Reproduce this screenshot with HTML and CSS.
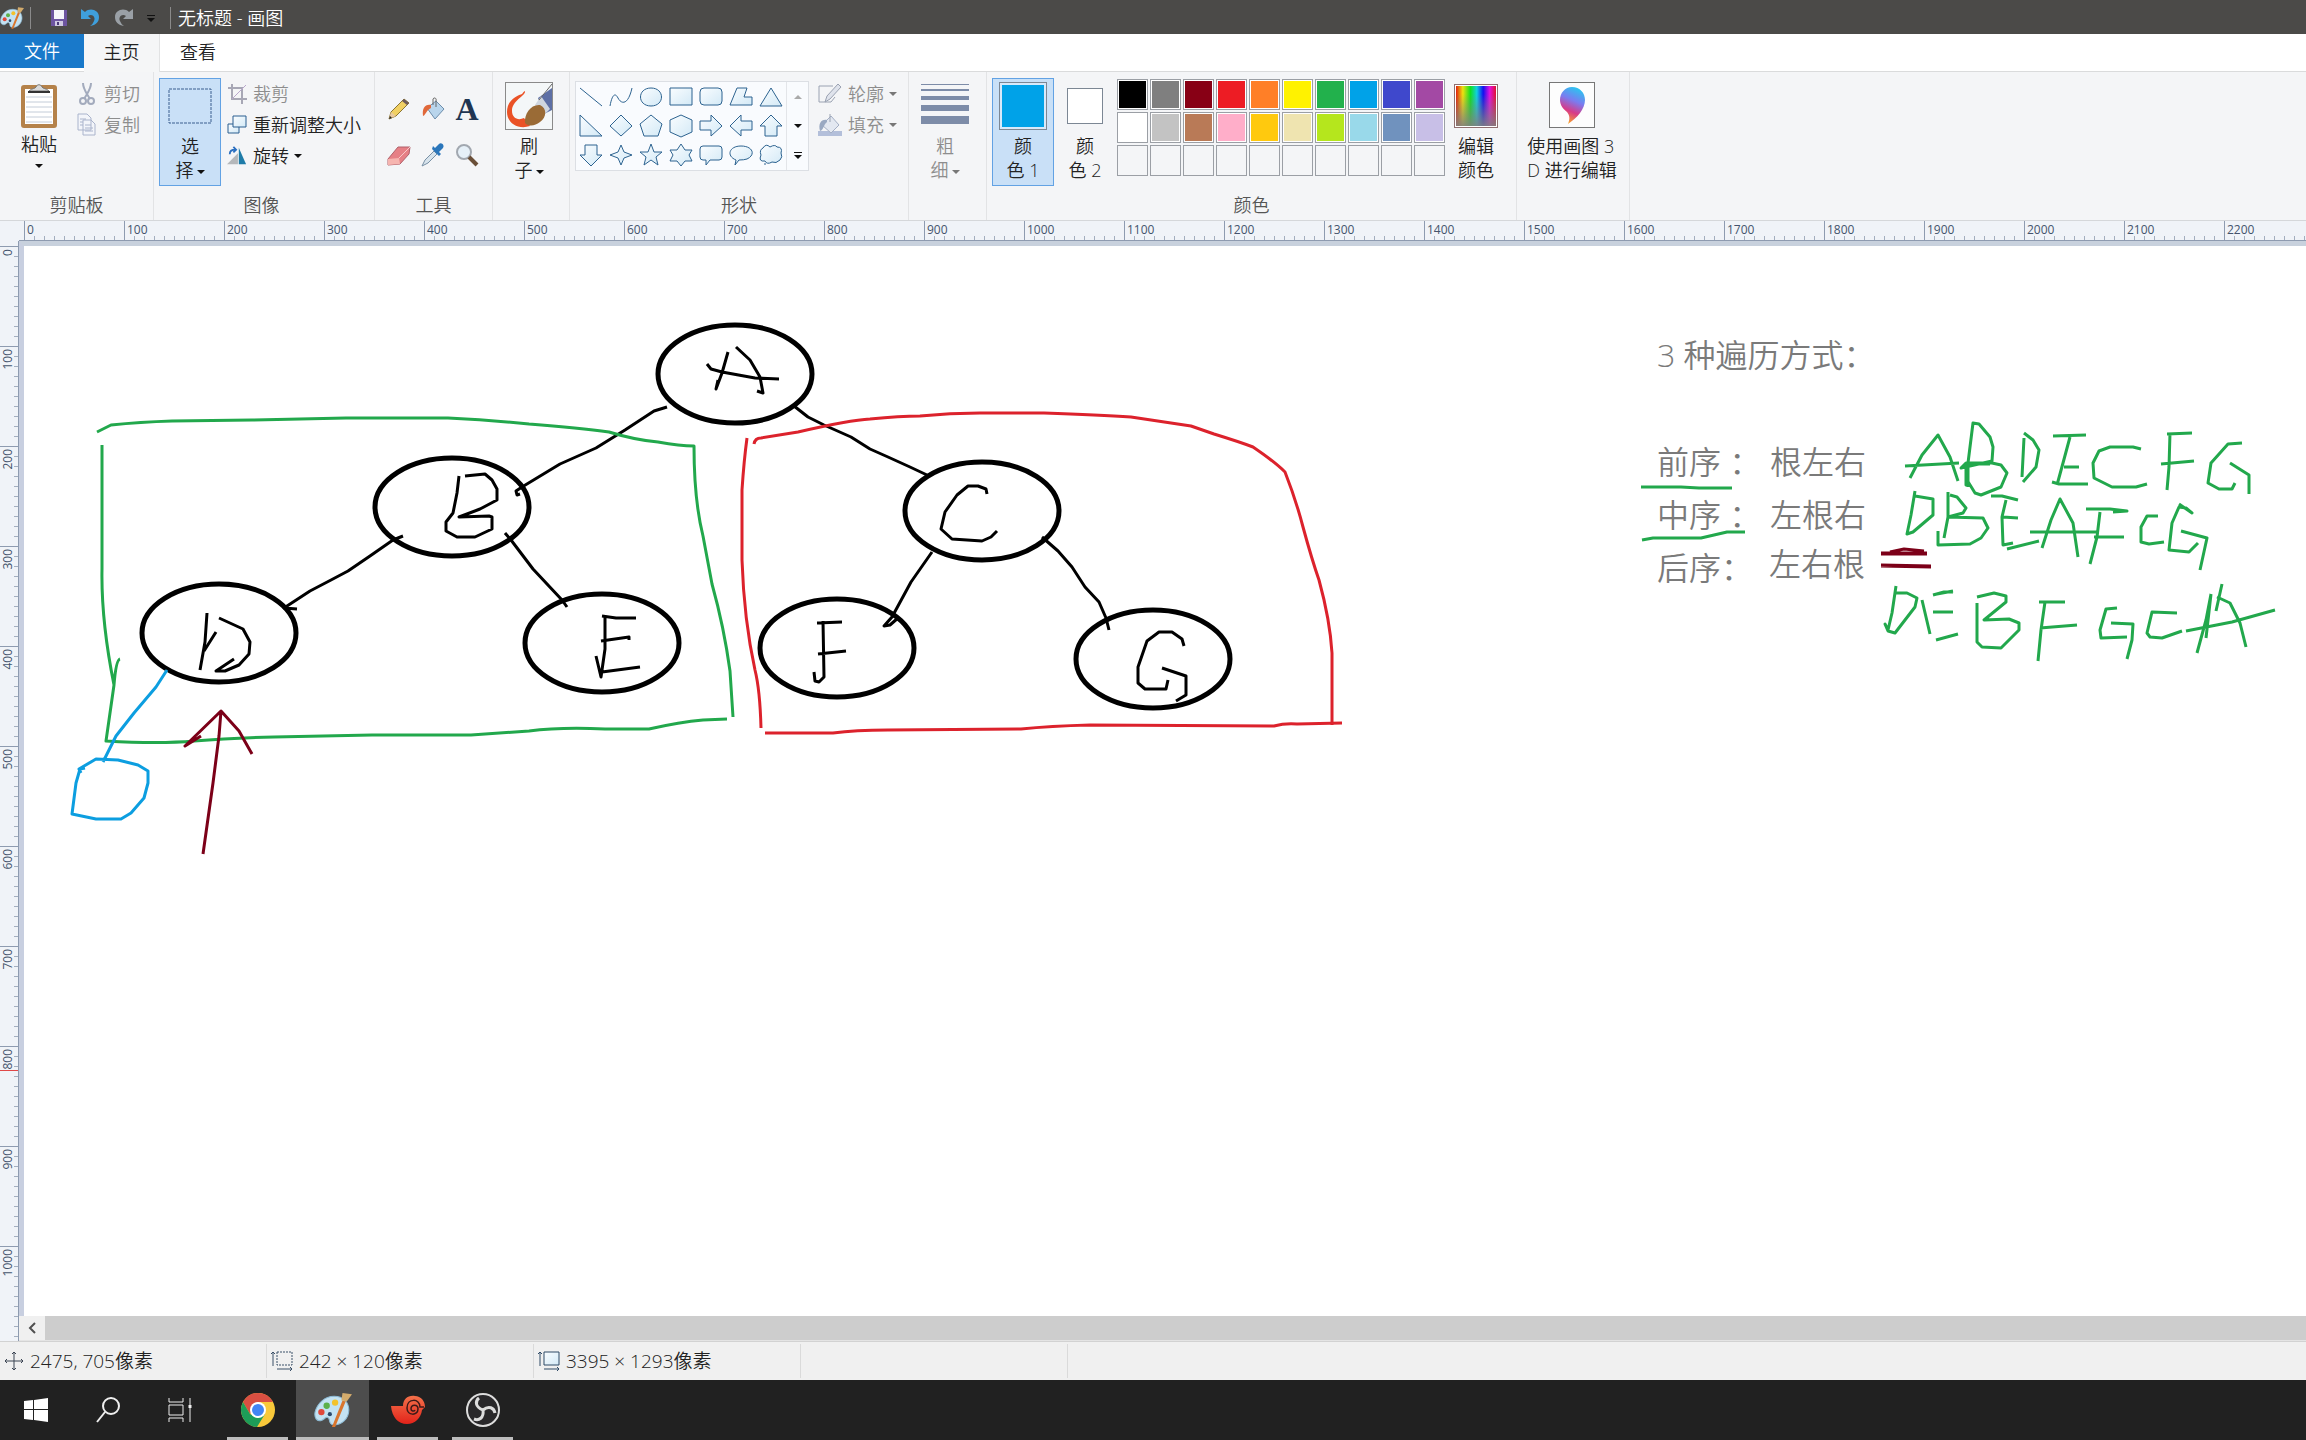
FILE: index.html
```html
<!DOCTYPE html>
<html lang="zh-CN">

<head>
    <meta charset="UTF-8">
    <meta name="viewport" content="width=device-width, initial-scale=1.0">
    <title>无标题 - 画图</title>
    <link rel="stylesheet" href="styles.css">
</head>

<body>
    <svg class="defs" width="0" height="0">
        <defs>
            <linearGradient id="glass" x1="0" y1="0" x2="1" y2="1">
                <stop offset="0" stop-color="#fafdff" />
                <stop offset="1" stop-color="#d3e9f6" />
            </linearGradient>
            <linearGradient id="rainbow">
                <stop offset="0" stop-color="#e02010" />
                <stop offset=".17" stop-color="#f0e010" />
                <stop offset=".36" stop-color="#10e020" />
                <stop offset=".52" stop-color="#10d0e0" />
                <stop offset=".68" stop-color="#1010f0" />
                <stop offset=".84" stop-color="#e010e0" />
                <stop offset="1" stop-color="#e01030" />
            </linearGradient>
            <linearGradient id="fade" x1="0" y1="0" x2="0" y2="1">
                <stop offset=".2" stop-color="#808080" stop-opacity="0" />
                <stop offset="1" stop-color="#808080" stop-opacity=".9" />
            </linearGradient>
            <linearGradient id="drop" x1=".6" y1="0" x2=".3" y2="1">
                <stop offset="0" stop-color="#2cc4f0" />
                <stop offset=".35" stop-color="#7a7cf0" />
                <stop offset=".65" stop-color="#d83a88" />
                <stop offset="1" stop-color="#fbb020" />
            </linearGradient>
            <linearGradient id="shell" x1="0" y1="1" x2="0" y2="0">
                <stop offset="0" stop-color="#e2231a" />
                <stop offset="1" stop-color="#f4714a" />
            </linearGradient>
            <symbol id="palette" viewBox="0 0 36 36">
                <path d="M19 5C10 5 3 12 1 20c-1 6 2 9 6 8 3-1 4-4 6-3 3 1 0 6 5 7 8 1 15-6 15-14 0-7-5-13-14-13z" fill="#c3e2f2" stroke="#8dbad4" />
                <circle cx="7" cy="20" r="3" fill="#e0483a" />
                <circle cx="12" cy="14" r="3" fill="#5cb04a" />
                <circle cx="20" cy="11" r="3" fill="#f3c22b" />
                <circle cx="15" cy="22" r="2" fill="#2b4a6b" />
                <path d="M17 34 27 9l3 1-10 24z" fill="#d9762e" />
                <path d="m26 9 1-7 9 1-5 7z" fill="#d3ab6c" />
            </symbol>
        </defs>
    </svg>

    <header class="titlebar">
        <svg class="app-icon" viewBox="0 0 36 36"><use href="#palette" /></svg>
        <span class="bar-sep"></span>
        <button class="quick" aria-label="保存">
            <svg width="20" height="20" viewBox="0 0 20 20"><path d="M2 2h16v16H2z" fill="#6d55a0" /><path d="M5 2h10v9H5z" fill="#f6f6fb" /><path d="M6 13h8v5H6z" fill="#cfc9e2" /><path d="M8 14h2v3H8z" fill="#4b3a78" /></svg>
        </button>
        <button class="quick" aria-label="撤消">
            <svg width="22" height="22" viewBox="0 0 22 22"><path d="M1 2v10h10L8 9c4-3 8 1 6 5-1 2-2 4-4 5 6-1 9-4 9-9C19 3 10 0 5 5z" fill="#3f9fdc" /></svg>
        </button>
        <button class="quick" aria-label="重做">
            <svg width="22" height="22" viewBox="0 0 22 22"><path d="M21 2v10H11l3-3c-4-3-8 1-6 5 1 2 2 4 4 5-6-1-9-4-9-9C3 3 12 0 17 5z" fill="#9aa0a6" /></svg>
        </button>
        <button class="quick quick-more" aria-label="自定义快速访问工具栏"><i class="line"></i><i class="arrow"></i></button>
        <span class="bar-sep"></span>
        <span class="title">无标题 - 画图</span>
    </header>

    <nav class="tabs">
        <button class="tab file">文件</button>
        <button class="tab active">主页</button>
        <button class="tab">查看</button>
    </nav>

    <section class="ribbon">
        <div class="group clipboard">
            <div class="tools">
                <button class="big paste">
                    <svg width="36" height="44" viewBox="0 0 36 44"><rect x="2" y="3" width="32" height="39" rx="1" fill="#fff" stroke="#b5824a" stroke-width="4" /><path d="M5 13h26M5 18h26M5 23h26M5 28h26M5 33h26M5 38h26" stroke="#c3ccd8" /><path d="M8 7c3-3 6-2 7-4 1-3 5-3 6 0 1 2 4 1 7 4z" fill="#d9d9d9" stroke="#777" /><path d="M7 8h22" stroke="#333" stroke-width="2" /></svg>
                    <span>粘贴</span>
                    <i class="arrow"></i>
                </button>
                <div class="rows">
                    <button class="row off">
                        <svg width="22" height="24" viewBox="0 0 22 24"><path d="M7 1c0 6 3 9 7 16M15 1c0 6-3 9-7 16" fill="none" stroke="#a3abbd" stroke-width="2" /><circle cx="7" cy="19" r="3" fill="none" stroke="#a3abbd" stroke-width="2" /><circle cx="15" cy="19" r="3" fill="none" stroke="#a3abbd" stroke-width="2" /></svg>
                        剪切
                    </button>
                    <button class="row off">
                        <svg width="22" height="24" viewBox="0 0 22 24"><path d="M2 1h9l4 4v12H2zM7 7h8l4 4v11H7z" fill="#f3f5fa" stroke="#aab4cc" /><path d="M4 6h6M4 9h3M4 12h3M9 12h6M9 15h8M9 18h8" stroke="#aab4cc" /></svg>
                        复制
                    </button>
                </div>
            </div>
            <div class="name">剪贴板</div>
        </div>

        <div class="group image">
            <div class="tools">
                <button class="big checked select">
                    <svg width="44" height="36" viewBox="0 0 44 36"><rect x="1" y="1" width="42" height="34" fill="none" stroke="#3a5f8f" stroke-dasharray="3 1" /></svg>
                    <span>选<br>择<i class="arrow"></i></span>
                </button>
                <div class="rows">
                    <button class="row off">
                        <svg width="20" height="22" viewBox="0 0 20 22"><path d="M5 1v15h15M1 5h14v16" fill="none" stroke="#a7a7b5" stroke-width="2" /><path d="M5 16 19 2" stroke="#b9a7cc" /></svg>
                        裁剪
                    </button>
                    <button class="row">
                        <svg width="20" height="20" viewBox="0 0 20 20"><path d="M1 9h11v9H1z" fill="url(#glass)" stroke="#2a5f90" /><path d="M6 1h13v11H6z" fill="url(#glass)" stroke="#2a5f90" /></svg>
                        重新调整大小
                    </button>
                    <button class="row">
                        <svg width="20" height="20" viewBox="0 0 22 20"><path d="M0 19 12 7v12z" fill="#b5b8bb" /><path d="M13 1v18h8z" fill="#1e7ba8" /><path d="M3 8c0-4 3-5 6-5M7 0l3 3-3 3" fill="none" stroke="#2a6fc0" stroke-width="2" /></svg>
                        旋转<i class="arrow"></i>
                    </button>
                </div>
            </div>
            <div class="name">图像</div>
        </div>

        <div class="group kit">
            <div class="tools kit-grid">
                <button aria-label="铅笔"><svg viewBox="0 0 24 24"><path d="m2 22 2-7L17 2l5 4L9 19z" fill="#f1d063" stroke="#8a7432" /><path d="m17 2 5 4-2 2-5-4z" fill="#6d5a5a" /><path d="m2 22 2-7 5 4z" fill="#e9c9a0" /><path d="m2 22 1-3 2 2z" fill="#222" /></svg></button>
                <button aria-label="填充"><svg viewBox="0 0 24 24"><path d="m6 11 9-7 8 8-9 10z" fill="#b9d5ec" stroke="#6c8dab" /><path d="M10 8c-6-1-9 3-8 11 3-1 3-6 8-8z" fill="#e0683a" /><path d="M12 8V2c1-2 4-1 3 2v6" fill="none" stroke="#666" /></svg></button>
                <button class="letter" aria-label="文本">A</button>
                <button aria-label="橡皮擦"><svg viewBox="0 0 24 24"><path d="M1 16 11 4h12l-1 7-9 10-12 1z" fill="#e68086" stroke="#b0606a" /><path d="m1 16 11-1 1 6-12 1z" fill="#f6b5b0" /><path d="m12 15 11-11" stroke="#f8c9c9" /></svg></button>
                <button aria-label="颜色选取器"><svg viewBox="0 0 24 24"><path d="m1 23 3-6 9-9 3 3-9 9z" fill="#d7e3ec" stroke="#7890a5" /><path d="m11 6 7 7 2-2-2-2 4-4c2-3-2-6-4-4l-4 4-2-2z" fill="#2a76bb" /></svg></button>
                <button aria-label="放大镜"><svg viewBox="0 0 24 24"><circle cx="9" cy="9" r="7" fill="#e6f0f8" stroke="#a2a8b0" stroke-width="2" /><path d="m14 14 8 8" stroke="#6a4f38" stroke-width="4" /></svg></button>
            </div>
            <div class="name">工具</div>
        </div>

        <div class="group brush">
            <div class="tools">
                <button class="big">
                    <svg width="48" height="48" viewBox="0 0 48 48"><rect x=".5" y=".5" width="47" height="47" fill="#f4f7f8" stroke="#8a8a8a" /><path d="M20 9c1 5-13 9-13 20 0 7 6 10 12 7l6 8C13 48 2 41 2 30 2 17 14 13 17 12c1-1 1-2 3-3z" fill="#ea5226" /><path d="m33 16 14-10v22l-8 4z" fill="#5d6fa5" /><path d="m30 23 6-9 9 13-6 6z" fill="#cfd6df" /><path d="M20 41c-1-9 6-19 15-18 7 3 7 12 0 17-5 4-11 5-15 1z" fill="#9a6b36" /><path d="M47 2 34 18" stroke="#666" /></svg>
                    <span>刷<br>子<i class="arrow"></i></span>
                </button>
            </div>
            <div class="name"></div>
        </div>

        <div class="group shapes">
            <div class="tools">
                <div class="gallery">
                    <div class="shape-grid" id="shapeGrid"></div>
                    <div class="gallery-scroll">
                        <button class="off" aria-label="上"><i class="arrow up"></i></button>
                        <button aria-label="下"><i class="arrow"></i></button>
                        <button aria-label="更多"><i class="line"></i><i class="arrow"></i></button>
                    </div>
                </div>
                <div class="rows">
                    <button class="row off">
                        <svg width="24" height="22" viewBox="0 0 24 22"><path d="M15 3H1v16h12l4-5" fill="none" stroke="#9aa2b2" /><path d="m7 19 2-6L20 1l3 3-11 12z" fill="#dfe3ec" stroke="#9aa2b2" /></svg>
                        轮廓<i class="arrow"></i>
                    </button>
                    <button class="row off">
                        <svg width="24" height="24" viewBox="0 0 24 24"><path d="M0 18h24v5H0z" fill="#b3bfda" /><path d="m4 12 9-9 8 9-8 8z" fill="#e3e8f1" stroke="#a3aec4" /><path d="M9 7C3 6 0 11 2 18c4-1 3-6 7-9z" fill="#9aa9c2" /><path d="M12 9V1" stroke="#9aa2b2" /></svg>
                        填充<i class="arrow"></i>
                    </button>
                </div>
            </div>
            <div class="name">形状</div>
        </div>

        <div class="group size">
            <div class="tools">
                <button class="big off">
                    <svg width="48" height="48" viewBox="0 0 48 48" fill="#7d8ca8"><path d="M0 2h48v1H0zM0 7h48v2H0zM0 14h48v4H0zM0 23h48v6H0zM0 34h48v8H0z" /></svg>
                    <span>粗<br>细<i class="arrow"></i></span>
                </button>
            </div>
            <div class="name"></div>
        </div>

        <div class="group colors">
            <div class="tools">
                <button class="big checked">
                    <span class="swatch first"></span>
                    <span>颜<br>色 1</span>
                </button>
                <button class="big">
                    <span class="swatch second"></span>
                    <span>颜<br>色 2</span>
                </button>
                <div class="palette" id="paletteGrid"></div>
                <button class="big edit">
                    <svg width="44" height="44" viewBox="0 0 44 44"><rect x=".5" y=".5" width="43" height="43" fill="#fff" stroke="#8f6f70" /><rect x="2" y="2" width="40" height="40" fill="url(#rainbow)" /><rect x="2" y="2" width="40" height="40" fill="url(#fade)" /></svg>
                    <span>编辑<br>颜色</span>
                </button>
            </div>
            <div class="name">颜色</div>
        </div>

        <div class="group paint3d">
            <div class="tools">
                <button class="big">
                    <svg width="46" height="46" viewBox="0 0 46 46"><rect x=".5" y=".5" width="45" height="45" fill="#fdfdfd" stroke="#777" /><path d="M23 5c8 0 13 6 13 13 0 9-8 18-17 24 2-5 2-8-1-12-4-3-7-7-7-12 0-7 5-13 12-13z" fill="url(#drop)" /></svg>
                    <span>使用画图 3<br>D 进行编辑</span>
                </button>
            </div>
            <div class="name"></div>
        </div>
    </section>

    <main class="workspace">
        <div class="corner"></div>
        <div class="ruler-h" id="rulerH"></div>
        <div class="ruler-v" id="rulerV"><span class="cursor-mark"></span></div>
        <div class="view">
            <div class="canvas">
                <svg width="2282" height="1070" viewBox="24 246 2282 1070">
                    <!-- tree nodes -->
                    <g class="ink node">
                        <ellipse cx="735" cy="374" rx="77" ry="49" />
                        <ellipse cx="452" cy="507" rx="77" ry="49" />
                        <ellipse cx="982" cy="511" rx="77" ry="49" />
                        <ellipse cx="219" cy="633" rx="77" ry="49" />
                        <ellipse cx="602" cy="643" rx="77" ry="49" />
                        <ellipse cx="837" cy="648" rx="77" ry="49" />
                        <ellipse cx="1153" cy="659" rx="77" ry="49" />
                    </g>
                    <!-- branches -->
                    <g class="ink">
                        <path d="M667 407 654 411 625 430 596 448 560 464 522 487 516 491 517 495 520 494" />
                        <path d="M794 406 808 417 824 425 851 437 870 449 888 457 910 467 927 475" />
                        <path d="M403 536 393 540 370 556 348 571 331 580 310 591 284 608 297 609" />
                        <path d="M505 533 511 540 533 569 562 600 567 607" />
                        <path d="M932 552 911 582 892 617 884 626 890 625 898 618" />
                        <path d="M1042 537 1058 551 1072 567 1085 587 1099 602 1106 618 1109 630" />
                    </g>
                    <!-- letters in the nodes -->
                    <g class="ink">
                        <path d="M728 352 722 373 716 389 718 380M736 347 750 360 760 377 763 393 757 391M707 364 711 369 722 372 755 378 779 379" />
                        <path d="M459 476 457 493 453 513 446 522 446 531 457 537 475 537 492 529 492 517 489 516 459 517 480 509 497 500 497 489 492 480 485 474 465 476" />
                        <path d="M987 494 986 489 978 486 968 486 957 495 945 512 941 529 952 539 982 541 991 537 997 531" />
                        <path d="M207 613 205 642 200 670M204 651 216 632M219 618 243 629 250 642 249 654 239 665 225 671 216 671 234 659" />
                        <path d="M602 616 616 618 636 618M601 641 629 637 629 640M605 616 605 649 601 677 596 656M602 672 640 667" />
                        <path d="M817 623 842 622M823 621 824 677 819 682 815 681 814 672M818 654 846 651" />
                        <path d="M1184 646 1182 639 1172 632 1159 632 1147 641 1138 667 1138 683 1145 689 1166 689 1168 680M1162 668 1186 676 1186 695 1176 701" />
                    </g>
                    <!-- left and right subtree -->
                    <g class="ink green">
                        <path d="M97 432 111 425Q140 422 172 421L252 420 346 418H448Q490 420 529 424 580 428 609 432 635 440 658 442 680 446 694 446 694 500 703 536L712 584Q724 627 730 671L733 717" />
                        <path d="M102 445V569Q101 620 114 685M120 659Q116 660 114 685L106 741Q160 744 194 741 230 738 274 737L372 735H471L529 731Q560 727 605 729H649Q680 722 703 720L727 719" />
                    </g>
                    <g class="ink red">
                        <path d="M747 438Q744 460 742 490V560Q744 620 755 670 760 690 761 728" />
                        <path d="M754 444Q755 438 761 438L798 432Q850 420 870 419 900 416 920 416 950 413 980 413H1044Q1100 415 1131 417 1165 422 1191 426L1214 434Q1240 442 1253 447 1275 462 1285 472 1296 500 1303 527 1312 560 1319 580 1330 620 1332 653V725" />
                        <path d="M765 733H833Q855 730 888 730L1021 729Q1050 726 1090 725L1274 726Q1285 723 1297 724L1342 723" />
                    </g>
                    <path class="ink blue" d="M167 670 156 687 134 713 116 736 103 762M81 773 79 769 96 759 118 760 138 765 148 771 148 783 144 798 131 813 121 819 96 819 72 814 76 783 80 769 85 768" />
                    <path class="ink maroon" d="M203 854 213 783 219 736 221 711 185 746 201 736M221 711 239 731 252 754" />
                    <!-- typed notes -->
                    <g class="note">
                        <text x="1657" y="367">3 种遍历方式：</text>
                        <text x="1657" y="474">前序 ：</text>
                        <text x="1770" y="474">根左右</text>
                        <text x="1657" y="527">中序 ：</text>
                        <text x="1770" y="527">左根右</text>
                        <text x="1657" y="580">后序：</text>
                        <text x="1769" y="576">左右根</text>
                    </g>
                    <g class="ink green">
                        <path d="M1641 487 1681 487 1699 488 1732 488M1642 540 1653 538 1701 538 1727 532 1745 532" />
                        <!-- A B D E C F G -->
                        <path d="M1910 478 1922 455 1938 435 1950 457 1958 481M1905 466 1959 463" />
                        <path d="M1968 487 1968 463 1973 423 1979 424 1990 437 1993 447 1992 461 1961 468 1966 463 1992 463 2001 465 2007 473 2001 487 1981 495 1975 493 1967 480 1966 485 1966 464 1990 464" />
                        <path d="M2024 438 2022 477M2024 433 2033 440 2039 450 2036 467 2023 482" />
                        <path d="M2053 436 2086 435M2070 437 2063 463 2057 485M2064 467 2079 467M2052 482 2059 484 2088 484" />
                        <path d="M2141 449 2133 447 2110 447 2099 451 2093 463 2094 478 2112 487 2136 487 2147 484" />
                        <path d="M2167 434 2192 433M2170 433 2169 467 2167 490M2161 464 2194 461" />
                        <path d="M2242 443 2228 444 2211 463 2208 483 2219 489 2232 489 2235 483M2230 463 2249 475 2249 494" />
                        <!-- D B E A F C G -->
                        <path d="M1915 491 1911 515 1907 534 1913 532 1933 515 1933 499 1915 496" />
                        <path d="M1948 492 1948 517 1944 538M1950 495 1957 497 1966 508 1963 513 1948 517 1983 518 1988 528 1981 538 1970 544 1938 545 1938 531" />
                        <path d="M1991 496 2002 496 2018 500M2006 500 2002 517 2003 545 2013 543M2003 517 2018 518M2007 549 2039 541" />
                        <path d="M2042 548 2051 520 2060 499 2073 523 2078 557M2030 532 2099 532" />
                        <path d="M2086 509 2110 509 2127 511 2113 512M2100 512 2097 537 2090 564M2094 537 2124 537" />
                        <path d="M2158 516 2147 516 2141 527 2141 542 2149 544 2164 542" />
                        <path d="M2179 504 2192 513 2186 508 2179 507 2172 523 2169 550 2189 552 2198 543M2181 531 2207 538 2200 570" />
                        <!-- D E B F G C A -->
                        <path d="M1896 586 1892 613 1888 630 1885 624 1888 631 1895 633 1915 607 1917 598 1907 593 1895 593" />
                        <path d="M1922 600 1930 634M1933 595 1944 592 1953 592M1937 594 1953 591M1933 612 1953 612M1936 640 1958 634" />
                        <path d="M1977 603 1977 642 1982 647 2001 648 2019 630 2019 623 2009 619 1984 620 2006 602 2006 596 1994 593 1977 597" />
                        <path d="M2039 602 2065 602M2045 602 2041 630 2038 661M2040 628 2077 625" />
                        <path d="M2117 608 2106 609 2100 630 2101 638 2127 637M2111 623 2133 624 2132 640 2127 659" />
                        <path d="M2177 613 2152 612 2147 633 2150 637 2162 638 2182 631" />
                        <path d="M2211 594 2206 620 2197 653M2211 594 2206 638M2222 584 2216 611M2217 597 2230 603 2240 623 2246 647M2186 631 2232 622 2275 610" />
                    </g>
                    <path class="ink maroon" d="M1881 553H1927M1890 552 1904 549 1924 551M1881 554H1927M1881 566 1931 567M1881 565 1931 566" />
                </svg>
            </div>
            <div class="scrollbar">
                <button aria-label="向左滚动"><svg width="8" height="12" viewBox="0 0 8 12"><path d="M7 1 2 6l5 5" fill="none" stroke="#505050" stroke-width="2" /></svg></button>
                <div class="thumb"></div>
            </div>
        </div>
    </main>

    <footer class="status">
        <div class="cell">
            <svg width="20" height="20" viewBox="0 0 20 20" fill="none" stroke="#3b4452"><path d="M10 1v18M1 10h18M8 3l2-2 2 2M8 17l2 2 2-2M3 8l-2 2 2 2M17 8l2 2-2 2" /></svg>
            2475, 705像素
        </div>
        <div class="cell">
            <svg width="22" height="20" viewBox="0 0 22 20" fill="none" stroke="#3b5068"><path d="M6 1h15v13H6z" stroke-dasharray="2 1" /><path d="M2 15V1M0 3l2-2 2 2M6 18h15M19 16l2 2-2 2" /></svg>
            242 × 120像素
        </div>
        <div class="cell">
            <svg width="22" height="20" viewBox="0 0 22 20" fill="none" stroke="#2f4a66"><path d="M6 1h15v13H6z" fill="url(#glass)" /><path d="M2 15V1M0 3l2-2 2 2M6 18h15M19 16l2 2-2 2" /></svg>
            3395 × 1293像素
        </div>
        <div class="cell"></div>
    </footer>

    <div class="taskbar">
        <button class="sys" aria-label="开始"><svg width="24" height="24" viewBox="0 0 24 24" fill="#fff"><path d="m0 3 9-1v9H0zM10 2l14-2v11H10zM0 12h9v10l-9-1zM10 12h14v12l-14-2z" /></svg></button>
        <button class="sys" aria-label="搜索"><svg width="24" height="26" viewBox="0 0 24 26" fill="none" stroke="#eee" stroke-width="2"><circle cx="15" cy="9" r="8" /><path d="M9 15 1 25" /></svg></button>
        <button class="sys" aria-label="任务视图"><svg width="24" height="26" viewBox="0 0 24 26" fill="none" stroke="#eee"><path d="M1 1v4h14V1M1 25v-4h14v4M1 8h14v10H1zM22 1v24" /><path d="M22 8v3" stroke-width="3" /></svg></button>
        <div class="apps">
            <button class="app" aria-label="Chrome"><svg width="34" height="34" viewBox="0 0 34 34"><circle cx="17" cy="17" r="17" fill="#f9c93a" /><path d="M17 9h15A17 17 0 0 0 2 9l7 12z" fill="#d94f42" /><path d="M2 9a17 17 0 0 0 14 25l8-13-7 4-8-4z" fill="#1d9d58" /><circle cx="17" cy="17" r="8" fill="#fff" /><circle cx="17" cy="17" r="6" fill="#4285f4" /></svg></button>
            <button class="app current" aria-label="画图"><svg width="38" height="38" viewBox="0 0 36 36"><use href="#palette" /></svg></button>
            <button class="app" aria-label="鹦鹉螺"><svg width="34" height="30" viewBox="0 0 34 30"><path d="M0 11h12C12 4 17 0 24 1c6 0 10 5 10 11l-3 3c-1 8-7 14-15 14C7 29 1 22 0 11z" fill="url(#shell)" /><path d="M33 12h-4c0-9-13-9-13 1 0 8 11 8 11 1 0-5-7-5-7 0 0 2 3 3 4 1" fill="none" stroke="#3c1a18" stroke-width="1.5" /></svg></button>
            <button class="app" aria-label="OBS"><svg width="34" height="34" viewBox="0 0 34 34" fill="none" stroke="#ddd"><circle cx="17" cy="17" r="16" fill="#29282a" stroke-width="2" /><path d="M17 17C9 14 9 8 13 5M17 17c6-5 11-2 12 3M17 17c1 8-4 11-9 9" stroke-width="3" /></svg></button>
        </div>
    </div>

    <script>
        const colors = [
            "#000000", "#7f7f7f", "#880015", "#ed1c24", "#ff7f27", "#fff200", "#22b14c", "#00a2e8", "#3f48cc", "#a349a4",
            "#ffffff", "#c3c3c3", "#b97a57", "#ffaec9", "#ffc90e", "#efe4b0", "#b5e61d", "#99d9ea", "#7092be", "#c8bfe7",
            "", "", "", "", "", "", "", "", "", ""
        ];

        // name, path in a 24 x 24 box
        const shapes = [
            ["直线", "M1 3 23 21"],
            ["曲线", "M1 21C3 10 6 7 9 13s10 8 14-10"],
            ["椭圆形", "M12 3C26 3 26 21 12 21S-2 3 12 3z"],
            ["矩形", "M1 3h22v17H1z"],
            ["圆角矩形", "M5 3h14q4 0 4 4v9q0 4-4 4H5q-4 0-4-4V7q0-4 4-4z"],
            ["多边形", "M8 3h10l-3 9h8v8H1z"],
            ["三角形", "M12 3 23 21H1z"],
            ["直角三角形", "M1 1v21h22z"],
            ["菱形", "M12 1 23 12 12 22 1 12z"],
            ["五边形", "M12 1 23 10 19 22H5L1 10z"],
            ["六边形", "M12 1 23 6v12l-11 5L1 18V6z"],
            ["右箭头", "M1 7h11V1l11 11-11 10v-6H1z"],
            ["左箭头", "M23 7H12V1L1 12l11 10v-6h11z"],
            ["上箭头", "M12 1 23 12h-5v10H6V12H1z"],
            ["下箭头", "M12 23 1 12h5V2h12v10h5z"],
            ["四角星", "M12 2l3 7 8 3-8 3-3 7-3-7-8-3 8-3z"],
            ["五角星", "M12 1l3 8h8l-6 5 2 8-7-5-7 5 2-8-6-5h8z"],
            ["六角星", "M12 1l4 6h7l-3 5 3 6h-7l-4 5-4-5H1l3-6-3-5h7z"],
            ["圆角矩形标注", "M4 3h16q3 0 3 3v8q0 3-3 3H11l-4 5v-5H4q-3 0-3-3V6q0-3 3-3z"],
            ["椭圆形标注", "M6 22 7 17C-3 13 0 3 12 3s15 9 6 13q-3 1-8 1z"],
            ["云形标注", "M4 5Q7 0 11 4q5-3 7 0 6 0 4 6 2 4-1 7-4 4-8 2-5 3-7-1-7 1-4-6-2-5 2-7zM6 20v2"]
        ];

        const grid = document.getElementById("paletteGrid");
        colors.forEach(color => {
            const btn = document.createElement("button");
            btn.setAttribute("aria-label", color || "空");
            if (color) {
                btn.className = "filled";
                btn.style.backgroundColor = color;
            }
            grid.appendChild(btn);
        });

        document.getElementById("shapeGrid").innerHTML = shapes.map(([name, d]) =>
            `<button aria-label="${name}"><svg viewBox="0 0 24 24"><path d="${d}" /></svg></button>`
        ).join("");

        // one mark every 100 pixels, as many as the ruler has room for
        function addMarks(id, length) {
            const ruler = document.getElementById(id);
            for (let i = 0; i * 100 + 30 < length; i++) {
                const mark = document.createElement("div");
                mark.className = "mark";
                mark.innerHTML = `<span>${i * 100}</span>`;
                ruler.appendChild(mark);
            }
        }

        addMarks("rulerH", document.getElementById("rulerH").clientWidth);
        addMarks("rulerV", document.getElementById("rulerV").clientHeight);
    </script>
</body>

</html>
```
FILE: styles.css
```css
* {
    box-sizing: border-box;
}

body {
    margin: 0;
    height: 100vh;
    display: flex;
    flex-direction: column;
    overflow: hidden;
    font-family: "Open Sans", "Noto Sans CJK SC", sans-serif;
    font-size: 18px;
    line-height: 24px;
    font-weight: 350;
    color: #222;
    background: #f5f6f7;
}

button {
    margin: 0;
    padding: 0;
    border: 0;
    background: none;
    font: inherit;
    color: inherit;
}

svg {
    display: block;
    flex-shrink: 0;
}

.defs {
    position: absolute;
}

.arrow {
    display: inline-block;
    border: 4px solid transparent;
    border-top-color: #111;
    border-bottom: 0;
}

.arrow.up {
    border-top: 0;
    border-bottom: 4px solid #aaa;
}

.line {
    display: block;
    width: 8px;
    height: 1px;
    background: #111;
}

.off {
    color: #8d8d8d;
}

.off .arrow {
    border-top-color: #777;
}

/* title bar */
.titlebar {
    height: 34px;
    display: flex;
    align-items: center;
    padding-top: 2px;
    background: #4b4a48;
    color: #fff;
}

.app-icon {
    width: 24px;
    height: 24px;
    margin-right: 6px;
}

.bar-sep {
    width: 1px;
    height: 22px;
    background: #8a8a8a;
}

.quick {
    width: 32px;
    display: flex;
    justify-content: center;
}

.bar-sep + .quick {
    margin-left: 12px;
}

.quick-more {
    width: 24px;
    margin: 0 7px 0 0;
    flex-direction: column;
    align-items: center;
    gap: 2px;
}

.title {
    margin-left: 7px;
}

/* tabs */
.tabs {
    height: 38px;
    display: flex;
    background: #fff;
    border-bottom: 1px solid #dadbdc;
}

.tab {
    width: 76px;
    height: 36px;
}

.tab.file {
    width: 84px;
    height: 34px;
    background: #1979ca;
    color: #fff;
}

.tab.active {
    height: 38px;
    padding-bottom: 2px;
    background: #f5f6f7;
    border-right: 1px solid #e2e3e4;
}

/* ribbon */
.ribbon {
    height: 149px;
    display: flex;
    background: #f4f5f7;
    border-bottom: 1px solid #d5d7da;
}

.group {
    display: flex;
    flex-direction: column;
    justify-content: space-between;
    padding: 6px 5px 3px;
    border-right: 1px solid #e2e3e5;
}

.tools {
    display: flex;
}

.name {
    min-height: 24px;
    text-align: center;
    color: #555;
}

.big {
    width: 62px;
    height: 108px;
    padding-top: 3px;
    display: flex;
    flex-direction: column;
    align-items: center;
    gap: 4px;
    border: 1px solid transparent;
}

.big .arrow {
    margin-left: 3px;
    vertical-align: middle;
}

.big.checked {
    background: #c9e0f7;
    border-color: #62a2e4;
}

.row {
    height: 31px;
    display: flex;
    align-items: center;
    gap: 6px;
    white-space: nowrap;
}

.row .arrow {
    margin-left: -1px;
}

.clipboard {
    width: 154px;
    padding-left: 2px;
    padding-right: 2px;
}

.paste {
    width: 74px;
    padding-top: 5px;
}

.paste .arrow {
    margin: 4px 0 0;
}

.image {
    width: 221px;
    padding-right: 10px;
}

.select {
    padding-top: 9px;
    background-image: linear-gradient(#62a2e4, #62a2e4);
    background-size: 100% 1px;
    background-position: 0 54px;
    background-repeat: no-repeat;
    gap: 10px;
}

.image .rows {
    padding-left: 6px;
}

.kit {
    width: 118px;
}

.kit-grid {
    display: grid;
    grid-template-columns: repeat(3, 34px);
    grid-auto-rows: 46px;
    padding: 8px 2px;
}

.kit-grid button {
    display: flex;
    align-items: center;
    justify-content: center;
}

.kit-grid svg {
    width: 24px;
    height: 24px;
}

.kit-grid .letter {
    font: bold 32px/40px "Liberation Serif", serif;
    color: #1f3552;
}

.brush {
    width: 77px;
}

.shapes {
    width: 339px;
}

.shapes .rows {
    padding-left: 9px;
}

.gallery {
    display: flex;
    height: 90px;
    margin-top: 3px;
    border: 1px solid #dcdfe4;
    background: #f9fbfe;
}

.shape-grid {
    display: grid;
    grid-template-columns: repeat(7, 30px);
    grid-auto-rows: 29px;
}

.shape-grid button {
    display: flex;
    align-items: center;
    justify-content: center;
}

.shape-grid svg {
    width: 24px;
    height: 24px;
    fill: url(#glass);
    stroke: #2d6390;
}

.shape-grid button:nth-child(-n+2) svg {
    fill: none;
}

.gallery-scroll {
    width: 22px;
    display: grid;
    grid-template-rows: repeat(3, 1fr);
    border-left: 1px solid #e3e5e9;
}

.gallery-scroll button {
    display: flex;
    flex-direction: column;
    align-items: center;
    justify-content: center;
    gap: 2px;
}

.size {
    width: 78px;
}

.colors {
    width: 530px;
}

.swatch {
    width: 48px;
    height: 48px;
    border: 1px solid #7c8794;
}

.swatch.first {
    background: #00a2e8;
    box-shadow: inset 0 0 0 2px #d7e9fa;
}

.swatch.second {
    width: 36px;
    height: 36px;
    margin: 6px 0;
    background: #fff;
}

.palette {
    display: grid;
    grid-template-columns: repeat(10, 31px);
    grid-auto-rows: 31px;
    gap: 2px;
    padding: 1px 0 0 1px;
}

.palette button {
    border: 1px solid #9b9fa5;
}

.palette .filled {
    box-shadow: inset 0 0 0 1px #fff;
}

.edit {
    padding-top: 5px;
    gap: 6px;
}

.paint3d {
    width: 113px;
    padding-left: 3px;
}

.paint3d .big {
    width: 104px;
    text-align: left;
    white-space: nowrap;
    gap: 6px;
}

/* rulers and canvas */
.workspace {
    flex: 1;
    min-height: 0;
    display: grid;
    grid-template-columns: 19px 1fr;
    grid-template-rows: 20px 1fr;
    background: #f0f3f8;
}

.workspace > div {
    min-width: 0;
    min-height: 0;
    overflow: hidden;
}

.ruler-h {
    display: flex;
    padding-left: 5px;
    border-bottom: 1px solid #8e9bb0;
}

.ruler-v {
    display: flex;
    flex-direction: column;
    padding-top: 5px;
    border-right: 1px solid #8e9bb0;
    position: relative;
}

.mark {
    flex: 0 0 100px;
    font-size: 12px;
    line-height: 16px;
    font-weight: 400;
    color: #44536c;
}

.ruler-h .mark {
    padding-top: 1px;
    padding-left: 2px;
    border-left: 1px solid #8e9bb0;
    background: repeating-linear-gradient(90deg, transparent 0 9px, #a3aebf 9px 10px) 0 100% / 100% 4px no-repeat;
}

.ruler-v .mark {
    padding-top: 2px;
    border-top: 1px solid #8e9bb0;
    background: repeating-linear-gradient(transparent 0 9px, #a3aebf 9px 10px) 100% 0 / 4px 100% no-repeat;
}

.ruler-v span {
    display: block;
    width: 16px;
    writing-mode: vertical-rl;
    transform: rotate(180deg);
}

.ruler-v .cursor-mark {
    position: absolute;
    top: 829px;
    left: 0;
    width: 18px;
    height: 1px;
    background: #e04848;
}

.view {
    display: flex;
    flex-direction: column;
}

.canvas {
    flex: 1;
    min-height: 0;
    overflow: hidden;
    background: #fff;
    border-top: 5px solid #c8d1dd;
    border-left: 5px solid #c8cfe0;
}

.ink {
    fill: none;
    stroke: #000;
    stroke-width: 3;
    stroke-linejoin: round;
}

.node {
    stroke-width: 5;
}

.green {
    stroke: #22a84c;
}

.red {
    stroke: #dc222c;
}

.blue {
    stroke: #0c9ee0;
}

.maroon {
    stroke: #7c0018;
}

.note {
    font-size: 32px;
    fill: #7a7a7a;
}

.scrollbar {
    height: 25px;
    display: flex;
    border-bottom: 1px solid #e4e4e4;
}

.scrollbar button {
    width: 26px;
    display: flex;
    align-items: center;
    justify-content: center;
    background: #f0f0f0;
}

.thumb {
    flex: 1;
    background: #cdcdcd;
}

/* status bar */
.status {
    height: 39px;
    display: flex;
    background: #f0f0f0;
    border-top: 1px solid #d2d2d2;
    font-size: 19px;
}

.cell {
    width: 267px;
    margin: 2px 0;
    padding-left: 4px;
    display: flex;
    align-items: center;
    gap: 6px;
    border-right: 1px solid #dadada;
}

/* taskbar */
.taskbar {
    height: 60px;
    display: flex;
    background: #212121;
}

.sys {
    width: 72px;
    display: flex;
    align-items: center;
    justify-content: center;
}

.apps {
    display: flex;
    gap: 2px;
    margin-left: 5px;
}

.app {
    width: 73px;
    display: flex;
    align-items: center;
    justify-content: center;
    background: linear-gradient(#bdbdbd, #bdbdbd) 50% 100% / 61px 3px no-repeat;
}

.app.current {
    background-color: #4d4d4d;
    background-size: 100% 3px;
}
```
